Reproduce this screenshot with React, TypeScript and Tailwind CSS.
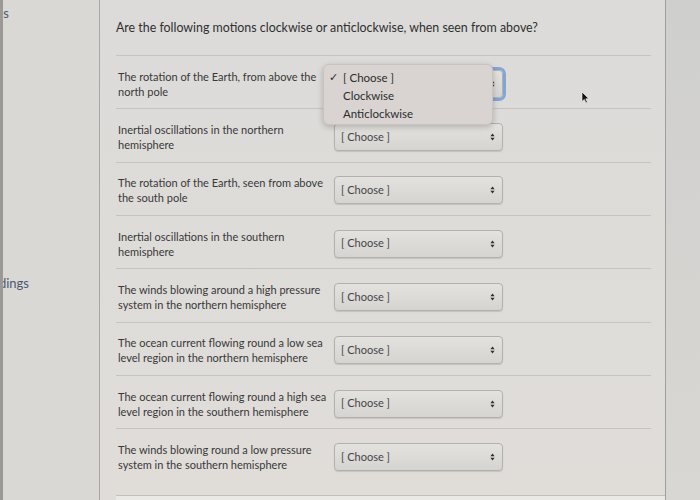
import React from 'react';

const rows = [
  ['The rotation of the Earth, from above the', 'north pole'],
  ['Inertial oscillations in the northern', 'hemisphere'],
  ['The rotation of the Earth, seen from above', 'the south pole'],
  ['Inertial oscillations in the southern', 'hemisphere'],
  ['The winds blowing around a high pressure', 'system in the northern hemisphere'],
  ['The ocean current flowing round a low sea', 'level region in the northern hemisphere'],
  ['The ocean current flowing round a high sea', 'level region in the southern hemisphere'],
  ['The winds blowing round a low pressure', 'system in the southern hemisphere'],
];

const Arrows = () => (
  <svg width="5" height="8" viewBox="0 0 5 8" className="shrink-0">
    <path d="M2.5 0.5 L4.6 3.3 L0.4 3.3 Z M2.5 7.5 L4.6 4.7 L0.4 4.7 Z" fill="#2e2e2e" />
  </svg>
);

const Select = ({ open }: { open?: boolean }) => (
  <div
    className={`relative ml-[14px] flex h-[28px] w-[169px] items-center justify-between rounded-[4px] border border-[#b3b1ad] bg-gradient-to-b from-[#e4e2df] to-[#d6d4d1] pl-[6px] pr-[7px] shadow-[0_1px_1px_rgba(0,0,0,0.12)] ${
      open ? 'ring-[3px] ring-[#7fa6d8]' : ''
    }`}
  >
    <span className="text-[11px] text-[#454545]">[ Choose ]</span>
    <Arrows />
    {open && (
      <div className="absolute left-[-12px] top-[-7px] z-10 h-[61px] w-[170px] rounded-[6px] border border-[#c9c4c2] bg-[#d9d4d2] pt-[4px] shadow-[0_2px_6px_rgba(0,0,0,0.22)]">
        {['[ Choose ]', 'Clockwise', 'Anticlockwise'].map((o, i) => (
          <div key={o} className="flex h-[18px] items-center text-[11.5px] text-[#2c2c2c]">
            <span className="w-[19px] pl-[5px] text-[11px]">{i === 0 ? '✓' : ''}</span>
            <span>{o}</span>
          </div>
        ))}
      </div>
    )}
  </div>
);

export default function App() {
  return (
    <div
      className="relative flex h-[500px] w-[700px] overflow-hidden bg-gradient-to-b from-[#d6d5d3] to-[#dedbd6]"
      style={{ fontFamily: 'Lato, "Open Sans", sans-serif' }}
    >
      {/* left edge */}
      <div className="w-[3px] shrink-0 bg-[#9b9895]" />

      {/* sidebar */}
      <div className="flex w-[97px] shrink-0 flex-col border-r border-[#a9a7a3] bg-[#dad8d4]">
        <div className="mt-[4px] flex h-[18px] w-[6px] justify-end overflow-hidden whitespace-nowrap">
          <span className="shrink-0 text-[13px] leading-[18px] text-[#4a5876]">Modules</span>
        </div>
        <div className="mt-[252px] flex h-[18px] w-[26px] justify-end overflow-hidden whitespace-nowrap">
          <span className="shrink-0 text-[13px] leading-[18px] text-[#4a5876]">Readings</span>
        </div>
      </div>

      {/* content */}
      <div className="flex w-[566px] shrink-0 flex-col border-r border-[#9f9e9c] bg-gradient-to-b from-[#dcdbd9] to-[#e0ddd9] pl-[16px]">
        <div className="pt-[19px] text-[12.4px] leading-[18px] text-[#2f2f2f]">
          Are the following motions clockwise or anticlockwise, when seen from above?
        </div>
        <div className="mt-[18px] w-[535px]">
          {rows.map((r, i) => (
            <div key={i} className="flex h-[53.33px] items-center border-t border-[#c6c4c0] pt-[3px]">
              <div className="w-[204px] pl-[2px] text-[11px] leading-[15px] text-[#383838]">
                <div className="whitespace-nowrap">{r[0]}</div>
                <div className="whitespace-nowrap">{r[1]}</div>
              </div>
              <Select open={i === 0} />
            </div>
          ))}
        </div>
        <div className="mt-auto h-[5px] border-t border-[#c2c0bc] bg-[#ebe9e6]" />
      </div>

      {/* right area */}
      <div className="flex-1 bg-gradient-to-b from-[#cfcfce] to-[#d9d7d3]" />

      {/* mouse pointer */}
      <svg className="absolute left-[581px] top-[91px]" width="9" height="13" viewBox="0 0 9 13">
        <path d="M1 1 L1 10.5 L3.3 8.4 L5 12 L6.4 11.3 L4.8 7.8 L7.8 7.8 Z" fill="#111" stroke="#fff" strokeWidth="0.6" />
      </svg>
    </div>
  );
}
